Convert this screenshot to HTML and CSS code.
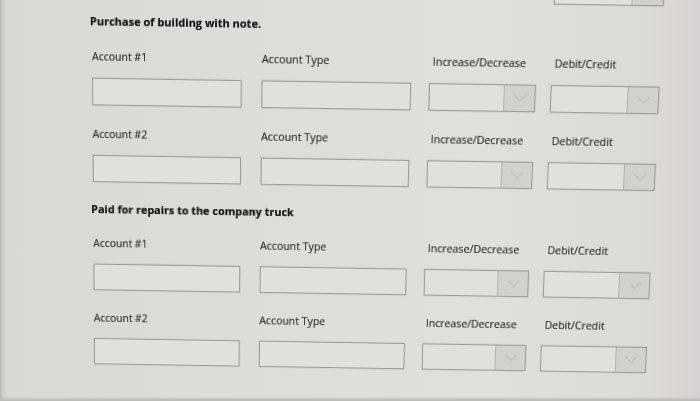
FILE: index.html
```html
<!DOCTYPE html>
<html lang="en">
<head>
<meta charset="utf-8">
<title>Journal entries</title>
<link rel="stylesheet" href="styles.css">
</head>
<body>
<div class="page">
  <div class="prev-row">
    <div class="dropdown dc"><div class="value"></div><div class="arrow"><svg width="13" height="7" viewBox="0 0 13 7"><path d="M0.5 0.5 L6.5 6 L12.5 0.5" fill="none" stroke="#b3b2af" stroke-width="1"/></svg></div></div>
  </div>

  <section class="entry">
    <h2 class="entry-title">Purchase of building with note.</h2>
    <div class="row">
      <div class="field"><label class="label acct">Account #1</label><div class="textbox"></div></div>
      <div class="field"><label class="label">Account Type</label><div class="textbox"></div></div>
      <div class="field"><label class="label ind">Increase/Decrease</label><div class="dropdown"><div class="value"></div><div class="arrow"><svg width="13" height="7" viewBox="0 0 13 7"><path d="M0.5 0.5 L6.5 6 L12.5 0.5" fill="none" stroke="#b3b2af" stroke-width="1"/></svg></div></div></div>
      <div class="field"><label class="label ind">Debit/Credit</label><div class="dropdown"><div class="value"></div><div class="arrow"><svg width="13" height="7" viewBox="0 0 13 7"><path d="M0.5 0.5 L6.5 6 L12.5 0.5" fill="none" stroke="#b3b2af" stroke-width="1"/></svg></div></div></div>
    </div>
    <div class="row">
      <div class="field"><label class="label acct">Account #2</label><div class="textbox"></div></div>
      <div class="field"><label class="label">Account Type</label><div class="textbox"></div></div>
      <div class="field"><label class="label ind">Increase/Decrease</label><div class="dropdown"><div class="value"></div><div class="arrow"><svg width="13" height="7" viewBox="0 0 13 7"><path d="M0.5 0.5 L6.5 6 L12.5 0.5" fill="none" stroke="#b3b2af" stroke-width="1"/></svg></div></div></div>
      <div class="field"><label class="label ind">Debit/Credit</label><div class="dropdown"><div class="value"></div><div class="arrow"><svg width="13" height="7" viewBox="0 0 13 7"><path d="M0.5 0.5 L6.5 6 L12.5 0.5" fill="none" stroke="#b3b2af" stroke-width="1"/></svg></div></div></div>
    </div>
  </section>

  <section class="entry">
    <h2 class="entry-title">Paid for repairs to the company truck</h2>
    <div class="row">
      <div class="field"><label class="label acct">Account #1</label><div class="textbox"></div></div>
      <div class="field"><label class="label">Account Type</label><div class="textbox"></div></div>
      <div class="field"><label class="label ind">Increase/Decrease</label><div class="dropdown"><div class="value"></div><div class="arrow"><svg width="13" height="7" viewBox="0 0 13 7"><path d="M0.5 0.5 L6.5 6 L12.5 0.5" fill="none" stroke="#b3b2af" stroke-width="1"/></svg></div></div></div>
      <div class="field"><label class="label ind">Debit/Credit</label><div class="dropdown"><div class="value"></div><div class="arrow"><svg width="13" height="7" viewBox="0 0 13 7"><path d="M0.5 0.5 L6.5 6 L12.5 0.5" fill="none" stroke="#b3b2af" stroke-width="1"/></svg></div></div></div>
    </div>
    <div class="row">
      <div class="field"><label class="label acct">Account #2</label><div class="textbox"></div></div>
      <div class="field"><label class="label">Account Type</label><div class="textbox"></div></div>
      <div class="field"><label class="label ind">Increase/Decrease</label><div class="dropdown"><div class="value"></div><div class="arrow"><svg width="13" height="7" viewBox="0 0 13 7"><path d="M0.5 0.5 L6.5 6 L12.5 0.5" fill="none" stroke="#b3b2af" stroke-width="1"/></svg></div></div></div>
      <div class="field"><label class="label ind">Debit/Credit</label><div class="dropdown"><div class="value"></div><div class="arrow"><svg width="13" height="7" viewBox="0 0 13 7"><path d="M0.5 0.5 L6.5 6 L12.5 0.5" fill="none" stroke="#b3b2af" stroke-width="1"/></svg></div></div></div>
    </div>
  </section>
</div>
</body>
</html>
```

FILE: styles.css
```css
html, body {
  margin: 0;
  padding: 0;
}

body {
  width: 700px;
  height: 401px;
  overflow: hidden;
  font-family: "Open Sans", "Noto Sans", "Liberation Sans", sans-serif;
  background:
    linear-gradient(to bottom, rgba(0,0,0,0) 0, rgba(0,0,0,0) 397px, #c4c3c0 399px, #b9b8b5 401px),
    linear-gradient(to right, #b8b8b6 0, #cfceca 3px, #d9d8d4 7px, #dedcd8 35%, #e0dfdb 70%, #dcdad7 93%, #d6d2d1 100%);
}

.page {
  padding-left: 92px;
  transform-origin: 0 0;
  transform: matrix3d(0.998952, 0.015708, 0, -0.00000158795,
                      0.016341, 1.036679, 0, 0.0001002166,
                      0, 0, 1, 0,
                      92, 77, 0, 1) translate(-92px, -77px);
}

.prev-row,
.row {
  display: grid;
  grid-template-columns: 170px 168px 122px 109px;
}

.prev-row {
  margin-top: -28px;
}

.prev-row .dc {
  grid-column: 4;
}

.entry {
  margin-top: 19px;
}

.prev-row + .entry {
  margin-top: 15px;
}

.entry-title {
  margin: 0 0 18px -2px;
  font-size: 11px;
  line-height: 16px;
  font-weight: 700;
  color: #141414;
  text-shadow: 0 0 0.6px rgba(0, 0, 0, 0.55);
}

.row + .row {
  margin-top: 20px;
}

.field {
  display: flex;
  flex-direction: column;
}

.label {
  display: block;
  height: 16px;
  line-height: 16px;
  margin-bottom: 13px;
  font-size: 10.8px;
  color: #2e2e2d;
  white-space: nowrap;
  text-shadow: 0 0 0.6px rgba(0, 0, 0, 0.45);
}

.label.acct {
  font-size: 10.5px;
}

.label.ind {
  padding-left: 3px;
}

.textbox,
.dropdown {
  box-sizing: border-box;
  height: 27px;
  border: 1px solid #9c9b98;
  background: #e1e0dc;
  box-shadow: 0 0 0.8px rgba(0, 0, 0, 0.35);
}

.textbox {
  width: 150px;
}

.dropdown {
  display: flex;
  width: 107px;
}

.field:last-child .dropdown,
.prev-row .dropdown {
  width: 109px;
}

.dropdown .value {
  flex: 1;
}

.dropdown .arrow {
  width: 30px;
  display: flex;
  align-items: center;
  justify-content: center;
  border-left: 1px solid #b2b1ae;
  background: #d2d1cd;
}

.dropdown .arrow svg {
  display: block;
}
```
